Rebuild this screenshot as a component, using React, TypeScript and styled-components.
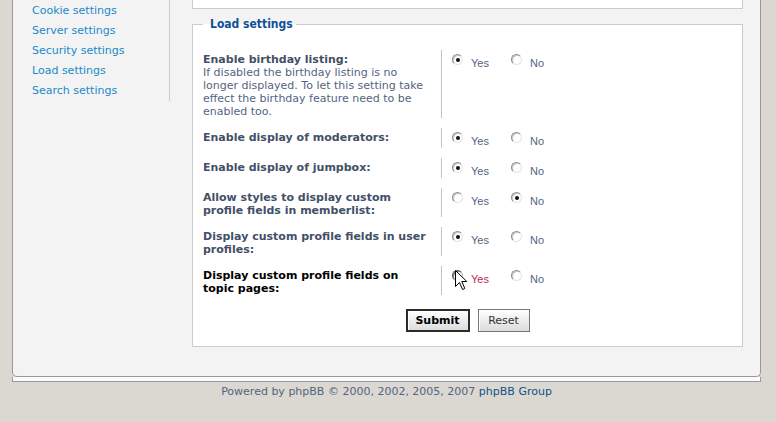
import styled, { createGlobalStyle } from 'styled-components'

const GlobalStyle = createGlobalStyle`
  html, body {
    margin: 0;
    padding: 0;
    background: #dbd8d1;
    height: 422px;
    overflow: hidden;
  }
  body {
    font-family: 'DejaVu Sans', Verdana, Tahoma, sans-serif;
    font-size: 11px;
  }
`

const Page = styled.div`
  position: relative;
  padding-left: 12px;
  width: 749px;
`

const Panel = styled.div`
  display: flex;
  align-items: flex-start;
  background: #f3f3f3;
  border: 1px solid #999;
  border-top: none;
  border-radius: 0 0 5px 5px;
  padding: 0 17px 29px 0;
`

const PanelFoot = styled.div`
  height: 4px;
  background: #fbfbfb;
  border: 1px solid #999;
  border-top: none;
`

const Sidebar = styled.div`
  width: 156px;
  border-right: 1px solid #ccc;
`

const MenuList = styled.ul`
  list-style: none;
  margin: 0;
  padding: 1px 0 0 19px;
`

const MenuLink = styled.li`
  line-height: 20px;
  color: #208acb;
  white-space: nowrap;
`

const Main = styled.div`
  margin-left: 22px;
  width: 551px;
`

const PrevBox = styled.div`
  height: 8px;
  background: #fff;
  border: 1px solid #ccc;
  border-top: none;
`

const Fieldset = styled.fieldset`
  margin: 8px 0 0;
  min-width: 0;
  background: #fff;
  border: 1px solid #ccc;
  padding: 19px 10px 14px 10px;
`

const Legend = styled.legend`
  padding: 0 3px 0 7px;
  font-family: 'DejaVu Sans Condensed', 'DejaVu Sans', Tahoma, sans-serif;
  font-weight: bold;
  font-size: 12px;
  line-height: 14px;
  color: #115098;
`

const Row = styled.dl`
  display: flex;
  align-items: stretch;
  margin: 0 0 10px;
`

const Label = styled.dt<{ $hover?: boolean }>`
  width: 238px;
  border-right: 1px solid #c4c4c4;
  padding-top: 3px;
  line-height: 13px;
  white-space: nowrap;
  color: ${(p) => (p.$hover ? '#000' : '#425067')};
`

const Title = styled.span`
  display: block;
  font-weight: bold;
`

const Explain = styled.span`
  display: block;
  color: #536482;
`

const Choices = styled.dd`
  display: flex;
  margin: 0 0 0 10px;
  padding-top: 4px;
`

const Choice = styled.label`
  display: flex;
  align-items: flex-start;
  margin-right: 22px;
`

const Radio = styled.span<{ $checked?: boolean; $hover?: boolean }>`
  position: relative;
  width: 9px;
  height: 9px;
  border-radius: 50%;
  border: 1px solid;
  border-color: ${(p) => (p.$hover ? '#555 #bbb #bbb #555' : '#8d8d8d #e4e4e4 #e4e4e4 #8d8d8d')};
  box-shadow: inset 1px 1px 0 ${(p) => (p.$hover ? '#777' : '#c8c8c8')};
  background: #fff;

  &::after {
    content: '';
    display: ${(p) => (p.$checked ? 'block' : 'none')};
    position: absolute;
    left: 3px;
    top: 3px;
    width: 4px;
    height: 4px;
    border-radius: 50%;
    background: #111;
  }
`

const ChoiceText = styled.span<{ $hover?: boolean }>`
  margin: 3px 0 0 8px;
  font-family: 'Liberation Sans', Arial, sans-serif;
  font-size: 11px;
  line-height: 13px;
  color: ${(p) => (p.$hover ? '#bc2a4d' : '#536482')};
`

// the row above keeps its 10px bottom margin, so this one only needs to win the collapse
const Buttons = styled.div`
  display: flex;
  justify-content: center;
  gap: 8px;
  margin-top: 14px;
`

const Button = styled.button<{ $primary?: boolean }>`
  height: 23px;
  min-width: ${(p) => (p.$primary ? '64px' : '52px')};
  padding: 0;
  font-family: 'DejaVu Sans', Verdana, Tahoma, sans-serif;
  font-size: 11px;
  font-weight: ${(p) => (p.$primary ? 'bold' : 'normal')};
  color: ${(p) => (p.$primary ? '#000' : '#333')};
  background: linear-gradient(#fff, #e9e9e9 60%, #dcdcdc);
  border: ${(p) => (p.$primary ? '2px solid #2b2b2b' : '1px solid #777')};
  box-shadow: inset 1px 1px 0 #fff;
`

const Footer = styled.div`
  padding-top: 3px;
  text-align: center;
  font-size: 11px;
  line-height: 13px;
  color: #536482;
`

const FooterLink = styled.span`
  color: #105289;
`

const Pointer = styled.svg`
  position: absolute;
  left: 455px;
  top: 270px;
`

const menu = ['Cookie settings', 'Server settings', 'Security settings', 'Load settings', 'Search settings']

type Setting = {
  title: string[]
  explain?: string[]
  yes: boolean
  hover?: boolean
}

const settings: Setting[] = [
  {
    title: ['Enable birthday listing:'],
    explain: [
      'If disabled the birthday listing is no',
      'longer displayed. To let this setting take',
      'effect the birthday feature need to be',
      'enabled too.'
    ],
    yes: true
  },
  { title: ['Enable display of moderators:'], yes: true },
  { title: ['Enable display of jumpbox:'], yes: true },
  { title: ['Allow styles to display custom', 'profile fields in memberlist:'], yes: false },
  { title: ['Display custom profile fields in user', 'profiles:'], yes: true },
  { title: ['Display custom profile fields on', 'topic pages:'], yes: true, hover: true }
]

const SettingRow = ({ s }: { s: Setting }) => (
  <Row>
    <Label $hover={s.hover}>
      {s.title.map((t) => (
        <Title key={t}>{t}</Title>
      ))}
      {s.explain?.map((t) => (
        <Explain key={t}>{t}</Explain>
      ))}
    </Label>
    <Choices>
      <Choice>
        <Radio $checked={s.yes} $hover={s.hover} />
        <ChoiceText $hover={s.hover}>Yes</ChoiceText>
      </Choice>
      <Choice>
        <Radio $checked={!s.yes} />
        <ChoiceText>No</ChoiceText>
      </Choice>
    </Choices>
  </Row>
)

const App = () => (
  <>
    <GlobalStyle />
    <Page>
      <Panel>
        <Sidebar>
          <MenuList>
            {menu.map((m) => (
              <MenuLink key={m}>{m}</MenuLink>
            ))}
          </MenuList>
        </Sidebar>
        <Main>
          <PrevBox />
          <Fieldset>
            <Legend>Load settings</Legend>
            {settings.map((s) => (
              <SettingRow key={s.title[0]} s={s} />
            ))}
            <Buttons>
              <Button $primary>Submit</Button>
              <Button>Reset</Button>
            </Buttons>
          </Fieldset>
        </Main>
      </Panel>
      <PanelFoot />
      <Footer>
        Powered by phpBB © 2000, 2002, 2005, 2007 <FooterLink>phpBB Group</FooterLink>
      </Footer>
      {/* mouse pointer resting on the last "Yes" */}
      <Pointer width='13' height='21' viewBox='0 0 13 21'>
        <path
          d='M0.5 0.5 L0.5 16.5 L4.5 12.5 L7.5 19.5 L9.8 18.5 L6.8 11.5 L11.8 11.5 Z'
          fill='#fff'
          stroke='#000'
          strokeWidth='1'
          strokeLinejoin='miter'
        />
      </Pointer>
    </Page>
  </>
)

export default App
